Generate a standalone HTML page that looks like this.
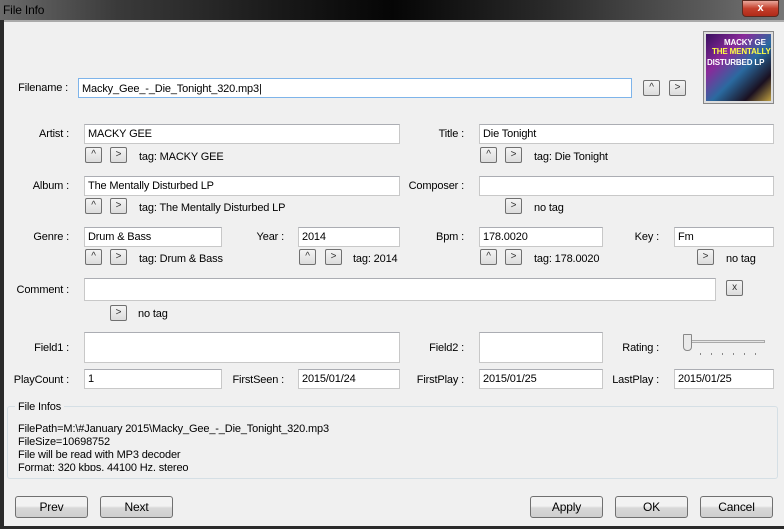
<!DOCTYPE html><html><head><style>
*{margin:0;padding:0;box-sizing:border-box}
body{width:784px;height:529px;background:#f0f0f0;font:11px "Liberation Sans",sans-serif;color:#000;position:relative;overflow:hidden;letter-spacing:-0.15px}
.a{position:absolute;white-space:nowrap}
.tb{left:0;top:0;width:784px;height:20px;background:linear-gradient(90deg,#6a6a6a 0,#3a3a3a 15%,#1a1a1a 35%,#050505 50%,#2a2a2a 70%,#5a5a5a 90%,#777 100%)}
.in{position:absolute;background:#fff;border:1px solid #c8c8c8;border-top-color:#abadb3;padding:3px 0 0 3px;height:20px}
.b{position:absolute;width:17px;height:16px;border:1px solid #707070;border-radius:2px;background:linear-gradient(#f4f4f4,#dcdcdc);font-size:10px;text-align:center;line-height:13px;color:#333}
.lb{position:absolute;text-align:right;width:80px}
.btn{position:absolute;top:496px;height:22px;border:1px solid #707070;border-radius:3px;background:linear-gradient(#f2f2f2 45%,#d8d8d8 55%,#cfcfcf);text-align:center;line-height:20px;font-size:12px}
</style></head><body>
<div class="a tb"></div>
<div class="a" style="left:3px;top:3px;color:#000;font-size:12px">File Info</div>
<div class="a" style="left:742px;top:0;width:37px;height:17px;background:linear-gradient(#e9a79a,#c4402c 50%,#b02a18);border:1px solid #5a2a20;border-radius:0 0 4px 4px;color:#fff;text-align:center;font-weight:bold;line-height:15px">x</div>
<div class="a" style="left:0;top:20px;width:4px;height:509px;background:#2a2a2a"></div>
<div class="a" style="left:4px;top:20px;width:780px;height:2px;background:#aaa"></div>

<div class="lb" style="left:-12px;top:82px">Filename :</div>
<div class="in" style="left:78px;top:78px;width:554px;border-color:#7eb4ea;padding-top:4px">Macky_Gee_-_Die_Tonight_320.mp3|</div>
<div class="b" style="left:643px;top:80px">^</div><div class="b" style="left:669px;top:80px">&gt;</div>
<div class="a" style="left:704px;top:32px;width:69px;height:71px;border:2px solid #ddd;outline:1px solid #888;background:linear-gradient(135deg,#3a1060,#8a2a9a 30%,#2a6aa0 55%,#1a1020 80%,#c0a040);overflow:hidden"></div>
<div class="a" style="left:724px;top:38px;color:#fff;font-size:8px;font-weight:bold">MACKY GE</div>
<div class="a" style="left:712px;top:47px;color:#ff4;font-size:8px;font-weight:bold">THE MENTALLY</div>
<div class="a" style="left:707px;top:58px;color:#fff;font-size:8px;font-weight:bold">DISTURBED LP</div>

<div class="lb" style="left:-11px;top:128px">Artist :</div>
<div class="in" style="left:84px;top:124px;width:316px">MACKY GEE</div>
<div class="b" style="left:85px;top:147px">^</div><div class="b" style="left:110px;top:147px">&gt;</div>
<div class="a" style="left:139px;top:151px">tag: MACKY GEE</div>
<div class="lb" style="left:384px;top:128px">Title :</div>
<div class="in" style="left:479px;top:124px;width:295px">Die Tonight</div>
<div class="b" style="left:480px;top:147px">^</div><div class="b" style="left:505px;top:147px">&gt;</div>
<div class="a" style="left:534px;top:151px">tag: Die Tonight</div>

<div class="lb" style="left:-11px;top:180px">Album :</div>
<div class="in" style="left:84px;top:176px;width:316px">The Mentally Disturbed LP</div>
<div class="b" style="left:85px;top:198px">^</div><div class="b" style="left:110px;top:198px">&gt;</div>
<div class="a" style="left:139px;top:202px">tag: The Mentally Disturbed LP</div>
<div class="lb" style="left:384px;top:180px">Composer :</div>
<div class="in" style="left:479px;top:176px;width:295px"></div>
<div class="b" style="left:505px;top:198px">&gt;</div>
<div class="a" style="left:534px;top:202px">no tag</div>

<div class="lb" style="left:-11px;top:231px">Genre :</div>
<div class="in" style="left:84px;top:227px;width:138px">Drum &amp; Bass</div>
<div class="b" style="left:85px;top:249px">^</div><div class="b" style="left:110px;top:249px">&gt;</div>
<div class="a" style="left:139px;top:253px">tag: Drum &amp; Bass</div>
<div class="lb" style="left:204px;top:231px">Year :</div>
<div class="in" style="left:298px;top:227px;width:102px">2014</div>
<div class="b" style="left:299px;top:249px">^</div><div class="b" style="left:325px;top:249px">&gt;</div>
<div class="a" style="left:353px;top:253px">tag: 2014</div>
<div class="lb" style="left:384px;top:231px">Bpm :</div>
<div class="in" style="left:479px;top:227px;width:124px">178.0020</div>
<div class="b" style="left:480px;top:249px">^</div><div class="b" style="left:505px;top:249px">&gt;</div>
<div class="a" style="left:534px;top:253px">tag: 178.0020</div>
<div class="lb" style="left:579px;top:231px">Key :</div>
<div class="in" style="left:674px;top:227px;width:100px">Fm</div>
<div class="b" style="left:697px;top:249px">&gt;</div>
<div class="a" style="left:726px;top:253px">no tag</div>

<div class="lb" style="left:-11px;top:284px">Comment :</div>
<div class="in" style="left:84px;top:278px;width:632px;height:23px"></div>
<div class="b" style="left:726px;top:280px">x</div>
<div class="b" style="left:110px;top:305px">&gt;</div>
<div class="a" style="left:138px;top:308px">no tag</div>

<div class="lb" style="left:-11px;top:342px">Field1 :</div>
<div class="in" style="left:84px;top:332px;width:316px;height:31px"></div>
<div class="lb" style="left:384px;top:342px">Field2 :</div>
<div class="in" style="left:479px;top:332px;width:124px;height:31px"></div>
<div class="lb" style="left:579px;top:342px">Rating :</div>
<div class="a" style="left:683px;top:340px;width:82px;height:3px;border:1px solid #aaa;background:#e6e6e6"></div>
<div class="a" style="left:683px;top:334px;width:9px;height:17px;border:1px solid #888;background:#eaeaea;border-radius:1px 1px 4px 4px"></div>
<div class="a" style="left:700px;top:353px;width:66px;height:2px;background:repeating-linear-gradient(90deg,#888 0 1px,transparent 1px 11px)"></div>

<div class="lb" style="left:-11px;top:374px">PlayCount :</div>
<div class="in" style="left:84px;top:369px;width:138px">1</div>
<div class="lb" style="left:204px;top:374px">FirstSeen :</div>
<div class="in" style="left:298px;top:369px;width:102px">2015/01/24</div>
<div class="lb" style="left:384px;top:374px">FirstPlay :</div>
<div class="in" style="left:479px;top:369px;width:124px">2015/01/25</div>
<div class="lb" style="left:579px;top:374px">LastPlay :</div>
<div class="in" style="left:674px;top:369px;width:100px">2015/01/25</div>

<div class="a" style="left:7px;top:406px;width:771px;height:73px;border:1px solid #d5dfe5;border-radius:3px"></div>
<div class="a" style="left:15px;top:401px;background:#f0f0f0;padding:0 3px">File Infos</div>
<div class="a" style="left:18px;top:423px;height:48px;overflow:hidden;line-height:13px">FilePath=M:\#January 2015\Macky_Gee_-_Die_Tonight_320.mp3<br>FileSize=10698752<br>File will be read with MP3 decoder<br>Format: 320 kbps, 44100 Hz, stereo</div>

<div class="btn" style="left:15px;width:73px">Prev</div>
<div class="btn" style="left:100px;width:73px">Next</div>
<div class="btn" style="left:530px;width:73px">Apply</div>
<div class="btn" style="left:615px;width:73px">OK</div>
<div class="btn" style="left:700px;width:73px">Cancel</div>
<div class="a" style="left:0;top:526px;width:784px;height:3px;background:#2a2a2a"></div>
</body></html>
